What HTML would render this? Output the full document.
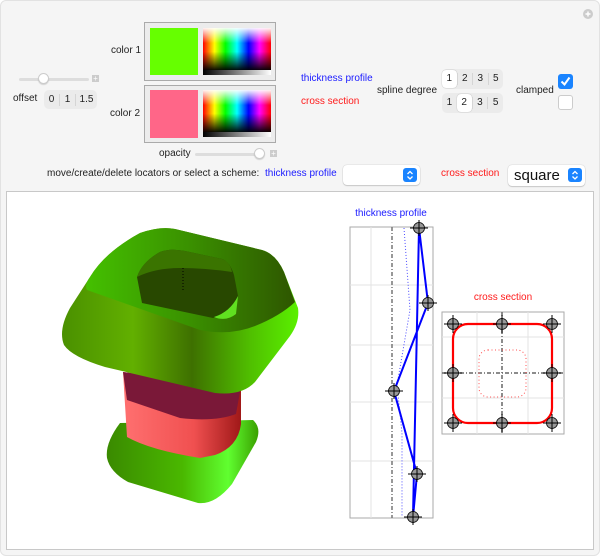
<!DOCTYPE html>
<html><head><meta charset="utf-8"><style>
*{margin:0;padding:0;box-sizing:border-box}
body{width:600px;height:557px;background:#fff;font-family:"Liberation Sans",sans-serif;font-size:10px;color:#222;position:relative;overflow:hidden}
.outer{position:absolute;left:0;top:0;width:600px;height:556px;background:#f5f5f5;border:1px solid #e2e2e2;border-radius:6px}
.a{position:absolute;white-space:nowrap}
.box{position:absolute;border:1px solid #aaa;background:#ececec}
.grad{position:absolute;background:linear-gradient(to bottom,rgba(255,255,255,0.95),rgba(255,255,255,0) 35%,rgba(0,0,0,0) 55%,#000 100%),linear-gradient(to right,#f00,#ff0 17%,#0f0 33%,#0ff 50%,#00f 67%,#f0f 83%,#f00)}
.gbar{position:absolute;background:linear-gradient(to right,#000,#fff)}
.track{position:absolute;height:3px;background:#ddd;border-radius:2px}
.thumb{position:absolute;width:11px;height:11px;border-radius:50%;background:#fff;border:1px solid #ccc;box-shadow:0 1px 1px rgba(0,0,0,.15)}
.plus{position:absolute;width:7px;height:7px;background:#ccc;color:#fff;font-size:8px;line-height:7px;text-align:center}
.seg{position:absolute;background:#ebebeb;border-radius:5px;display:flex;align-items:center}
.seg span{flex:1;text-align:center;font-size:10px;border-left:1px solid #d5d5d5;line-height:12px}
.seg span:first-child{border-left:none}
.seg span.on{background:#fff;border-radius:4px;box-shadow:0 0 1px #999;line-height:18px;border-left:none}
.pop{position:absolute;background:#fff;border-radius:4px;box-shadow:0 0 1px #aaa,0 1px 1px #ccc}
.pbtn{position:absolute;right:3px;top:3px;width:14px;height:14px;background:#1a84ff;border-radius:3px}
.blue{color:#1a1aff}.red{color:#ff1a1a}
</style></head><body>
<div class="outer"></div>
<svg class="a" style="left:582px;top:8px" width="12" height="12"><circle cx="6" cy="6" r="5" fill="#ccc"/><path d="M3.5 6h5M6 3.5v5" stroke="#fff" stroke-width="1.4"/></svg>

<div class="track" style="left:19px;top:78px;width:70px"></div>
<div class="thumb" style="left:38px;top:73px"></div>
<div class="plus" style="left:92px;top:75px">+</div>
<div class="a" style="left:13px;top:93px">offset</div>
<div class="seg" style="left:44px;top:90px;width:53px;height:19px"><span>0</span><span>1</span><span style="flex:1.4">1.5</span></div>

<div class="a" style="left:111px;top:45px">color 1</div>
<div class="box" style="left:144px;top:22px;width:132px;height:59px"></div>
<div class="a" style="left:150px;top:28px;width:48px;height:47px;background:#66ff00"></div>
<div class="grad" style="left:203px;top:28px;width:68px;height:43px"></div>
<div class="gbar" style="left:203px;top:70px;width:68px;height:5px"></div>

<div class="a" style="left:110px;top:108px">color 2</div>
<div class="box" style="left:144px;top:85px;width:132px;height:58px"></div>
<div class="a" style="left:150px;top:90px;width:48px;height:48px;background:#ff6688"></div>
<div class="grad" style="left:203px;top:90px;width:68px;height:43px"></div>
<div class="gbar" style="left:203px;top:132px;width:68px;height:5px"></div>

<div class="a" style="left:159px;top:148px">opacity</div>
<div class="track" style="left:195px;top:153px;width:69px"></div>
<div class="thumb" style="left:254px;top:148px"></div>
<div class="plus" style="left:270px;top:150px">+</div>

<div class="a blue" style="left:301px;top:73px">thickness profile</div>
<div class="a red" style="left:301px;top:96px">cross section</div>
<div class="a" style="left:377px;top:85px">spline degree</div>
<div class="seg" style="left:442px;top:69px;width:61px;height:20px"><span class="on">1</span><span>2</span><span>3</span><span>5</span></div>
<div class="seg" style="left:442px;top:93px;width:61px;height:20px"><span>1</span><span class="on">2</span><span>3</span><span>5</span></div>
<div class="a" style="left:516px;top:85px">clamped</div>
<div class="a" style="left:558px;top:74px;width:15px;height:15px;background:#1a84ff;border-radius:3px"><svg width="15" height="15"><path d="M3.5 7.5l3 3 5-7" stroke="#fff" stroke-width="2" fill="none"/></svg></div>
<div class="a" style="left:558px;top:95px;width:15px;height:15px;background:#fff;border:1px solid #ccc;border-radius:3px"></div>

<div class="a" style="left:47px;top:168px">move/create/delete locators or select a scheme:</div>
<div class="a blue" style="left:265px;top:168px">thickness profile</div>
<div class="pop" style="left:343px;top:165px;width:77px;height:20px"><div class="pbtn"><svg width="14" height="14"><path d="M4.5 6l2.5-2.5 2.5 2.5M4.5 8.5l2.5 2.5 2.5-2.5" stroke="#fff" stroke-width="1.3" fill="none"/></svg></div></div>
<div class="a red" style="left:441px;top:168px">cross section</div>
<div class="pop" style="left:508px;top:165px;width:77px;height:21px"><span class="a" style="left:6px;top:2px;font-size:15px;color:#111">square</span><div class="pbtn"><svg width="14" height="14"><path d="M4.5 6l2.5-2.5 2.5 2.5M4.5 8.5l2.5 2.5 2.5-2.5" stroke="#fff" stroke-width="1.3" fill="none"/></svg></div></div>

<div class="a" style="left:6px;top:191px;width:588px;height:359px;background:#fff;border:1px solid #c8c8c8"></div>

<svg class="a" style="left:0;top:0" width="600" height="557">
<defs>
<linearGradient id="gside" x1="0" y1="0" x2="1" y2="0"><stop offset="0" stop-color="#4a9000"/><stop offset=".3" stop-color="#62b000"/><stop offset=".55" stop-color="#3e7000"/><stop offset=".8" stop-color="#50c000"/><stop offset="1" stop-color="#5af000"/></linearGradient>
<linearGradient id="gtop" x1="0" y1="0" x2="1" y2="0"><stop offset="0" stop-color="#44c000"/><stop offset=".5" stop-color="#3a9000"/><stop offset="1" stop-color="#2e5600"/></linearGradient>
<linearGradient id="gr" x1="0" y1="0" x2="1" y2="0"><stop offset="0" stop-color="#ff7070"/><stop offset=".6" stop-color="#f05050"/><stop offset="1" stop-color="#a01818"/></linearGradient>
<linearGradient id="gb" x1="0" y1="0" x2="1" y2="0"><stop offset="0" stop-color="#3a8a00"/><stop offset=".5" stop-color="#4ab800"/><stop offset=".8" stop-color="#60ff30"/><stop offset="1" stop-color="#3aa000"/></linearGradient>
</defs>
<!-- bottom green -->
<path d="M120 423 L253 420 Q262 428 256 442 L232 484 Q215 505 198 503 L128 482 Q110 472 107 458 Q105 443 120 423 Z" fill="url(#gb)"/>
<!-- red middle -->
<path d="M123 372 L241 386 L241 424 Q238 447 215 455 L200 458 Q150 450 127 437 Z" fill="url(#gr)"/>
<path d="M123 372 L241 386 L236 414 Q215 422 180 418 L127 400 Z" fill="#7a1838"/>
<!-- top green -->
<path d="M90 277 Q105 252 140 233 Q160 226 175 229 L262 250 Q276 254 284 272 L298 308 Q300 322 290 336 L255 382 Q242 396 215 393 L105 367 Q72 357 64 345 Q58 330 70 308 Z" fill="url(#gside)"/>
<path d="M90 277 Q105 252 140 233 Q160 226 175 229 L262 250 Q276 254 284 272 L295 302 Q280 316 255 326 Q230 336 200 330 L87 290 Q84 285 90 277 Z" fill="url(#gtop)"/>
<!-- hole -->
<path d="M137 277 Q142 262 160 252 Q170 248 185 251 L222 259 Q230 262 234 275 L238 296 Q233 312 213 318 L142 303 Z" fill="#284800"/>
<path d="M137 277 Q142 262 160 252 Q170 248 185 251 L222 259 Q230 262 232 272 Q205 268 180 268 Q155 268 137 277 Z" fill="#3a7400"/>
<path d="M214 317 Q230 312 238 296 L236 314 Q226 322 214 317 Z" fill="#60e020"/>
<line x1="183" y1="268" x2="183" y2="290" stroke="#000" stroke-dasharray="1 2"/>

<!-- thickness plot -->
<text x="391" y="216" fill="#1a1aff" font-size="10" text-anchor="middle" font-family="Liberation Sans">thickness profile</text>
<rect x="350" y="227" width="83" height="291" fill="#fff" stroke="#aaa"/>
<g stroke="#e3e3e3"><line x1="371" y1="227" x2="371" y2="518"/><line x1="350" y1="285" x2="433" y2="285"/><line x1="350" y1="345" x2="433" y2="345"/><line x1="350" y1="402" x2="433" y2="402"/><line x1="350" y1="461" x2="433" y2="461"/></g>
<line x1="392" y1="227" x2="392" y2="518" stroke="#777" stroke-width="1.5" stroke-dasharray="4 2 1 2"/>
<path d="M404 228 L410 310 L397 385 L402 433 L402 517" stroke="#4d4dff" fill="none" stroke-dasharray="1 2"/>
<path d="M419 228 L428 303 L394 391 L417 474 L413 517 L419 228" stroke="#0000ff" stroke-width="2" fill="none"/>
<g fill="#999" stroke="#000" stroke-width=".8">
<circle cx="419" cy="228" r="5.5"/><circle cx="428" cy="303" r="5.5"/><circle cx="394" cy="391" r="5.5"/><circle cx="417" cy="474" r="5.5"/><circle cx="413" cy="517" r="5.5"/></g>
<g stroke="#000" stroke-width="1"><path d="M410 228h18M419 220v16M419 303h18M428 295v16M385 391h18M394 383v16M408 474h18M417 466v16M404 517h18M413 509v16"/></g>

<!-- cross section -->
<text x="503" y="300" fill="#ff1a1a" font-size="10" text-anchor="middle" font-family="Liberation Sans">cross section</text>
<rect x="442" y="312" width="122" height="122" fill="#fff" stroke="#aaa"/>
<g stroke="#e3e3e3"><line x1="477" y1="312" x2="477" y2="434"/><line x1="528" y1="312" x2="528" y2="434"/><line x1="442" y1="337" x2="564" y2="337"/><line x1="442" y1="398" x2="564" y2="398"/></g>
<g stroke="#666" stroke-width="1.5" stroke-dasharray="4 2 1 2"><line x1="502" y1="312" x2="502" y2="434"/><line x1="442" y1="373" x2="564" y2="373"/></g>
<rect x="479" y="350" width="47" height="47" rx="9" fill="none" stroke="#ff5050" stroke-dasharray="1 2.5"/>
<rect x="453" y="324" width="99" height="99" rx="15" fill="none" stroke="#ff0000" stroke-width="2.2"/>
<g fill="#999" stroke="#000" stroke-width=".8">
<circle cx="453" cy="324" r="5.5"/><circle cx="502" cy="324" r="5.5"/><circle cx="552" cy="324" r="5.5"/>
<circle cx="453" cy="373" r="5.5"/><circle cx="552" cy="373" r="5.5"/>
<circle cx="453" cy="423" r="5.5"/><circle cx="502" cy="423" r="5.5"/><circle cx="552" cy="423" r="5.5"/></g>
<g stroke="#000"><path d="M444 324h18M453 315v18M493 324h18M502 315v18M543 324h18M552 315v18M444 373h18M453 364v18M543 373h18M552 364v18M444 423h18M453 414v18M493 423h18M502 414v18M543 423h18M552 414v18"/></g>
</svg>
</body></html>
